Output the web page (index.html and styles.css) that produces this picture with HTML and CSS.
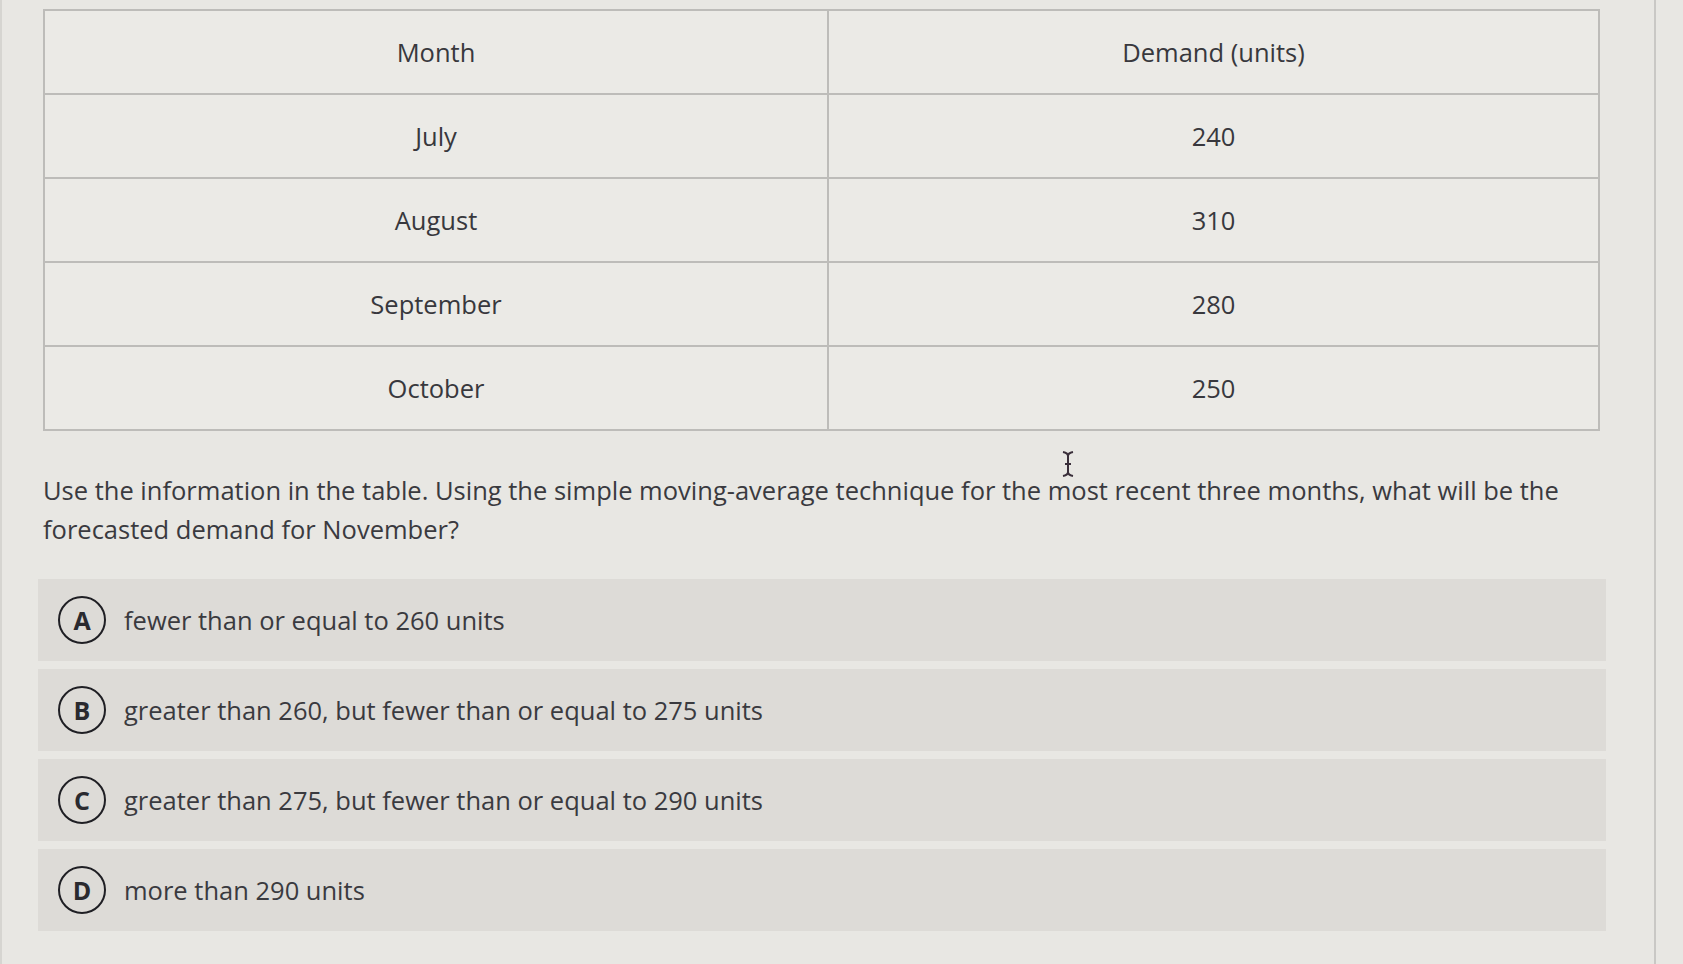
FILE: index.html
```html
<!DOCTYPE html>
<html lang="en">
<head>
<meta charset="utf-8">
<title>Question</title>
<link rel="stylesheet" href="styles.css">
</head>
<body>
<div class="screen">
  <div class="content">
    <table class="data">
      <tr><td>Month</td><td>Demand (units)</td></tr>
      <tr><td>July</td><td>240</td></tr>
      <tr><td>August</td><td>310</td></tr>
      <tr><td>September</td><td>280</td></tr>
      <tr><td>October</td><td>250</td></tr>
    </table>
    <p class="question">Use the information in the table. Using the simple moving-average technique for the most recent three months, what will be the forecasted demand for November?</p>
    <div class="options">
      <div class="option"><span class="letter">A</span><span class="label">fewer than or equal to 260 units</span></div>
      <div class="option"><span class="letter">B</span><span class="label">greater than 260, but fewer than or equal to 275 units</span></div>
      <div class="option"><span class="letter">C</span><span class="label">greater than 275, but fewer than or equal to 290 units</span></div>
      <div class="option"><span class="letter">D</span><span class="label">more than 290 units</span></div>
    </div>
  </div>
  <svg class="cursor" width="14" height="28" viewBox="0 0 14 28"><path d="M2 2 Q7 3 7 6 L7 22 Q7 25 2 26 M12 2 Q7 3 7 6 M7 22 Q7 25 12 26 M4 14 L10 14" fill="none" stroke="#3a2f3a" stroke-width="2"/></svg>
</div>
</body>
</html>
```

FILE: styles.css
```css
html, body {
  margin: 0;
  padding: 0;
  background: #e8e7e3;
}
body {
  font-family: "Open Sans", "Noto Sans", sans-serif;
  color: #3a3a3f;
}
.screen {
  position: relative;
  width: 1656px;
  height: 964px;
  border-right: 2px solid #c9c8c5;
  border-left: 2px solid #d6d5d1;
  box-sizing: border-box;
}
.content {
  padding: 9px 0 0 41px;
  width: 1610px;
  box-sizing: border-box;
}
.data {
  width: 1557px;
  border-collapse: collapse;
  background: #ebeae6;
}
.data td {
  border: 2px solid #bdbcb9;
  height: 82px;
  padding: 0;
  text-align: center;
  font-size: 25.5px;
  color: #38383d;
}
.data td:first-child {
  width: 782px;
}
.question {
  margin: 40px 0 0 0;
  font-size: 25.5px;
  line-height: 39px;
  color: #3a3a3f;
  width: 1560px;
}
.options {
  margin: 30px 0 0 -5px;
  display: flex;
  flex-direction: column;
  gap: 8px;
  width: 1568px;
}
.option {
  background: #dddbd7;
  height: 82px;
  display: flex;
  align-items: center;
  padding-left: 20px;
  gap: 18px;
}
.letter {
  width: 44px;
  height: 44px;
  border: 2.5px solid #1f1f24;
  border-radius: 50%;
  display: flex;
  align-items: center;
  justify-content: center;
  font-weight: 700;
  font-size: 25px;
  color: #2a2a2f;
  flex: none;
}
.label {
  font-size: 25.5px;
  color: #3a3a3f;
}
.cursor {
  position: absolute;
  left: 1059px;
  top: 450px;
}
```
